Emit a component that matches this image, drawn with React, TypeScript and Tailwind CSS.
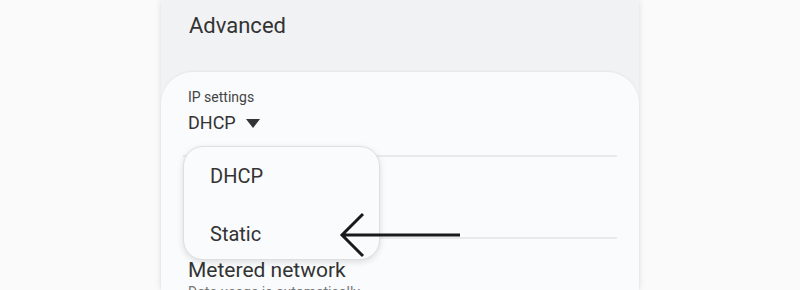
export default function App() {
  return (
    <div className="flex h-[290px] w-full justify-center overflow-hidden bg-[#fafafa] font-['Roboto',sans-serif]">
      <div className="relative flex w-[478px] flex-col bg-[#f1f2f4] shadow-[0_0_6px_rgba(0,0,0,0.12)]">
        {/* header */}
        <div className="flex h-[72px] shrink-0 items-start px-[28px] pt-[11px]">
          <span className="text-[22px] leading-[30px] text-[#333]">Advanced</span>
        </div>

        {/* settings card */}
        <div className="flex-1 rounded-t-[32px] bg-[#f9fbfd] px-[22px] pt-[15px] shadow-[0_-1px_2px_rgba(0,0,0,0.05)]">
          <div className="border-b-2 border-[#e9eaec] px-[5px] pb-[20px]">
            <div className="text-[14px] leading-[20px] text-[#444]">IP settings</div>
            <div className="mt-[4px] flex items-center gap-[10px] text-[18px] leading-[24px] text-[#333]">
              <span>DHCP</span>
              <svg width="14" height="9" viewBox="0 0 14 9">
                <path d="M0 0h14L7 9z" fill="#333" />
              </svg>
            </div>
          </div>
          <div className="h-[82px] border-b-2 border-[#e9eaec]" />
          <div className="px-[5px] pt-[18px]">
            <div className="text-[21px] leading-[26px] text-[#333]">Metered network</div>
            <div className="text-[14px] leading-[18px] text-[#777]">Data usage is automatically</div>
          </div>
        </div>

        {/* dropdown menu */}
        <div className="absolute left-[22px] top-[146px] flex h-[114px] w-[197px] flex-col rounded-[20px] border border-[#dedfe1] bg-[#fafbfc] px-[26px] shadow-[0_2px_6px_rgba(0,0,0,0.12)]">
          <div className="flex h-[58px] items-center pt-[1px] text-[20px] text-[#333]">DHCP</div>
          <div className="flex h-[56px] items-center pt-[5px] text-[20px] text-[#333]">Static</div>
        </div>

        {/* annotation arrow */}
        <svg className="absolute left-[177px] top-[211px]" width="124" height="50" viewBox="0 0 124 50">
          <path d="M122 24H4M25 3L4 24l21 21" fill="none" stroke="#1a1a1a" strokeWidth="3" />
        </svg>
      </div>
    </div>
  );
}
